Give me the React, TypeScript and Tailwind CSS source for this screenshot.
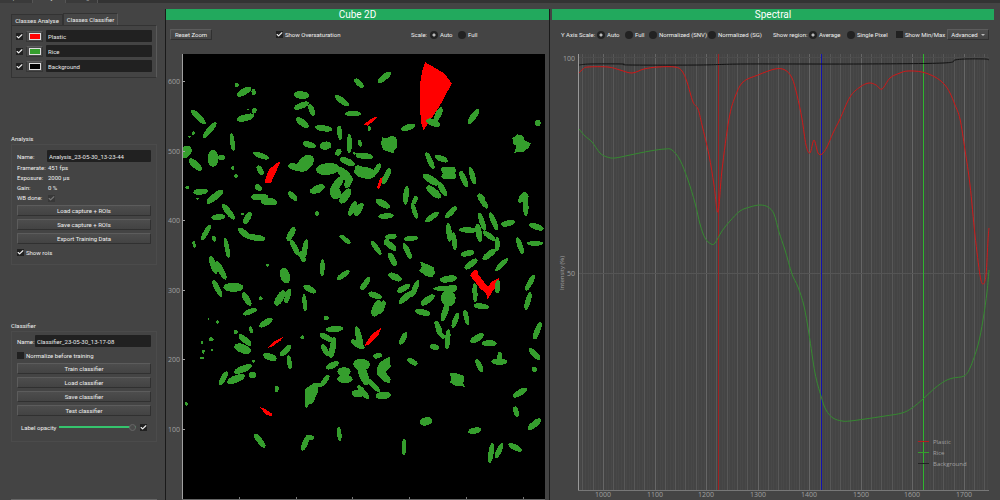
import React, { useState } from 'react';
import { Check } from 'lucide-react';

type Point = [number, number];
// x, y, length, thickness, rotation
type Grain = [number, number, number, number, number];

interface Tile {
  x: number;
  y: number;
  grains: Grain[];
  blobs?: string[];
  plastic?: string[];
}

// Classified objects, grouped by scan tile. Tile data is 3x oversampled.
const TILES: Tile[] = [
  {
    x: 165,
    y: 50,
    grains: [
      [215, 105, 12, 12, 0], [237, 125, 48, 20, -30], [266, 126, 18, 13, 80], [409, 135, 46, 22, 5], [409, 167, 48, 18, -22],
      [440, 180, 36, 16, 70], [582, 100, 36, 16, 45], [531, 152, 50, 18, 38], [564, 191, 48, 16, 0], [100, 201, 60, 18, 45],
      [242, 203, 54, 20, -15], [268, 182, 18, 13, -60], [249, 178, 6, 4, 0], [134, 240, 60, 17, -50], [85, 250, 12, 9, -60],
      [74, 260, 8, 6, 0], [202, 276, 54, 14, 82], [412, 218, 46, 20, 38], [476, 235, 52, 18, 8], [524, 248, 44, 14, 85],
      [553, 281, 58, 15, 90], [585, 280, 20, 12, 70], [433, 284, 40, 18, 15], [482, 287, 34, 24, -10], [62, 306, 42, 30, -50],
      [91, 344, 50, 20, 42], [144, 325, 50, 30, 90], [170, 323, 20, 16, 0], [288, 317, 50, 16, 20], [203, 354, 12, 10, 0],
      [213, 378, 11, 11, 0], [286, 361, 32, 16, 60], [390, 351, 42, 20, 15], [421, 340, 60, 38, -45], [520, 307, 22, 16, -50],
      [547, 335, 48, 20, 25], [568, 310, 8, 8, 0], [590, 317, 36, 16, 5], [488, 357, 70, 34, -5], [540, 375, 60, 26, 45],
      [515, 405, 60, 24, -55], [590, 365, 50, 24, 40], [67, 412, 12, 11, 0], [107, 425, 44, 18, -5], [280, 413, 24, 16, 45],
      [458, 417, 46, 22, -25], [550, 395, 40, 20, -70],
    ],
    plastic: ['340,336 345,338 330,372 318,398 300,400 299,393 312,358'],
  },
  {
    x: 355,
    y: 50,
    grains: [
      [88, 82, 50, 18, -38], [355, 200, 54, 18, -55], [250, 193, 46, 18, -65], [235, 218, 44, 20, 20], [548, 219, 18, 18, 0],
      [160, 232, 44, 18, -18], [43, 235, 16, 9, 80], [28, 318, 54, 18, 8], [225, 332, 54, 16, 65], [259, 326, 42, 17, 22],
      [326, 387, 54, 17, 68], [352, 377, 54, 16, 75], [228, 389, 56, 22, 32], [262, 417, 50, 18, 60], [236, 426, 54, 22, 40],
      [30, 368, 66, 34, 10], [66, 358, 40, 16, -60], [94, 379, 54, 17, -65], [378, 442, 26, 16, 45], [505, 440, 30, 20, -40],
    ],
    blobs: [
      '472,264 488,253 505,258 508,270 527,280 522,292 506,305 478,308 484,288 474,280',
      '80,262 96,265 108,257 124,262 127,290 118,300 118,311 85,300 79,285',
      '260,352 298,351 303,360 300,370 305,378 300,388 264,387 258,380 263,370 258,360',
    ],
    plastic: [
      '211,37 268,70 290,100 262,155 206,241 200,225 196,190 196,95 202,60',
      '27,224 45,208 68,198 65,205 38,227',
      '66,412 76,384 83,382 81,396 72,418',
    ],
  },
  {
    x: 165,
    y: 190,
    grains: [
      [97, 26, 8, 6, 0], [150, 20, 62, 20, -38], [284, 21, 52, 20, 0], [312, 35, 50, 22, 5], [383, 18, 36, 16, 45],
      [450, 3, 32, 14, 0], [512, 10, 32, 34, 0], [541, 18, 52, 24, -55], [563, 55, 48, 18, -65], [582, 58, 44, 18, -60],
      [456, 70, 14, 12, -50], [190, 65, 58, 18, 52], [160, 81, 42, 17, -5], [233, 72, 8, 8, 0], [247, 84, 40, 18, -60],
      [123, 127, 54, 15, -60], [147, 146, 18, 11, 80], [87, 163, 22, 9, 80], [186, 174, 62, 14, 80], [238, 130, 46, 18, 40],
      [272, 143, 60, 18, 8], [378, 132, 46, 18, -62], [389, 173, 54, 16, 62], [419, 180, 66, 16, -80], [412, 200, 34, 16, 70],
      [540, 148, 40, 14, 38], [145, 225, 56, 18, 70], [168, 241, 62, 18, 62], [307, 226, 9, 8, 0], [472, 233, 50, 14, -88],
      [535, 255, 46, 16, -35], [596, 287, 30, 16, -60], [360, 257, 48, 28, 75], [157, 295, 56, 16, 62], [205, 292, 60, 26, 0],
      [245, 327, 46, 18, 58], [287, 325, 12, 12, 0], [345, 324, 52, 22, -58], [368, 318, 46, 16, -75], [434, 297, 42, 18, 30],
      [419, 338, 52, 13, 85], [255, 365, 44, 16, -22], [303, 398, 46, 18, -32], [484, 384, 14, 13, 0], [157, 396, 10, 10, 0],
      [130, 386, 5, 5, 0], [212, 426, 12, 12, 0], [258, 419, 22, 10, 80], [139, 448, 14, 12, 0], [111, 457, 9, 8, 0],
      [509, 417, 52, 18, -5], [412, 442, 13, 10, -40], [582, 438, 60, 16, 75],
    ],
  },
  {
    x: 355,
    y: 190,
    grains: [
      [10, 58, 40, 18, -60], [83, 41, 48, 20, 28], [93, 78, 46, 16, -3], [153, 16, 56, 16, -85], [180, 30, 26, 14, -70],
      [178, 62, 50, 14, 72], [288, 67, 48, 16, -45], [231, 81, 48, 16, -35], [282, 127, 58, 16, 85], [298, 154, 54, 14, 85],
      [383, 34, 52, 16, 55], [505, 25, 36, 16, -35], [512, 45, 66, 17, 88], [381, 95, 56, 16, 72], [416, 94, 58, 16, 68],
      [340, 120, 58, 16, 2], [371, 128, 56, 18, 80], [402, 137, 46, 16, 35], [427, 162, 42, 14, 90], [403, 193, 50, 18, -38],
      [459, 100, 42, 18, -12], [544, 110, 46, 18, 20], [540, 160, 48, 14, 0], [495, 167, 52, 16, 72], [440, 224, 52, 15, -45],
      [338, 190, 42, 17, -12], [348, 222, 48, 18, -38], [64, 174, 50, 15, 55], [108, 140, 34, 15, -5], [106, 166, 46, 18, 40],
      [94, 155, 24, 12, -65], [112, 208, 44, 18, 62], [168, 145, 44, 15, -5], [157, 183, 52, 16, 65], [120, 261, 44, 20, 25],
      [32, 280, 44, 16, -58], [146, 295, 44, 18, -30], [180, 295, 54, 16, -68], [152, 322, 54, 18, -42], [280, 267, 52, 20, -8],
      [265, 296, 60, 14, 0], [292, 295, 28, 22, 0], [280, 325, 44, 46, 0], [270, 365, 60, 18, -72], [218, 330, 50, 20, -35],
      [203, 367, 48, 18, 12], [301, 391, 48, 16, -70], [334, 382, 48, 15, 78], [360, 308, 56, 15, 88], [428, 290, 40, 16, -85],
      [379, 349, 46, 17, 8], [525, 278, 54, 16, -62], [519, 333, 56, 16, -75], [547, 422, 54, 17, -68], [60, 316, 42, 18, 20],
      [65, 355, 52, 26, -68], [80, 352, 44, 18, -68], [250, 413, 46, 16, 68], [278, 448, 60, 16, -85], [257, 432, 34, 14, 50],
      [12, 442, 66, 18, 75], [145, 445, 42, 16, -62], [366, 445, 46, 20, -32], [403, 460, 44, 18, 0],
    ],
    blobs: ['195,214 215,222 238,232 239,250 232,263 212,258 193,242 200,230'],
    plastic: ['345,256 358,240 368,242 370,254 398,290 412,274 432,264 430,280 410,308 398,328 392,308 376,296'],
  },
  {
    x: 165,
    y: 335,
    grains: [
      [240, 15, 48, 18, 40], [233, 41, 52, 26, 20], [315, 66, 42, 20, 20], [362, 47, 44, 18, -45], [373, 81, 42, 14, 82],
      [265, 78, 9, 9, 0], [115, 50, 12, 8, -70], [141, 44, 7, 6, 0], [111, 69, 11, 6, 0], [234, 102, 56, 20, -22],
      [175, 130, 46, 17, -62], [213, 132, 56, 22, -22], [262, 120, 22, 18, 0], [335, 162, 20, 12, -80], [64, 207, 11, 10, 0],
      [485, 8, 46, 18, 30], [480, 45, 38, 16, 60], [503, 38, 66, 18, -80], [490, 56, 20, 14, 0], [578, 28, 48, 18, 30],
      [502, 91, 42, 18, -25], [537, 110, 40, 26, 0], [540, 132, 46, 24, 0], [480, 137, 42, 15, -55], [284, 317, 52, 17, 52],
      [420, 325, 46, 17, -68], [434, 308, 26, 16, 10], [523, 297, 44, 13, 85], [580, 175, 40, 22, 0],
    ],
    blobs: ['420,162 445,145 475,144 472,154 458,156 458,172 444,205 432,207 425,221 420,215 421,178'],
    plastic: ['306,41 330,18 353,7 348,16 325,32', '285,217 295,219 322,236 319,243 303,239'],
  },
  {
    x: 355,
    y: 335,
    grains: [
      [238, 36, 28, 17, 12], [68, 62, 26, 16, -15], [172, 80, 34, 16, 30], [373, 92, 44, 16, 65], [433, 80, 48, 18, 0],
      [434, 64, 28, 14, -85], [539, 57, 46, 18, 45], [541, 4, 18, 14, -60], [538, 103, 15, 15, 0], [20, 88, 50, 32, 5],
      [25, 118, 70, 26, 70], [54, 150, 56, 16, 45], [25, 172, 54, 16, 50], [8, 178, 30, 18, 0], [85, 181, 46, 22, -5],
      [495, 173, 50, 18, -30], [483, 230, 32, 15, 75], [538, 268, 50, 19, -40], [213, 259, 38, 24, -12], [359, 287, 40, 18, -12],
      [147, 336, 48, 14, -88], [408, 354, 60, 16, -82], [432, 347, 50, 16, -65], [480, 337, 44, 17, 28],
    ],
    blobs: [
      '283,116 300,113 325,122 329,135 324,145 329,155 300,152 284,142 290,132',
      '104,66 105,85 108,95 92,112 107,132 104,143 88,142 68,122 65,100 74,82 90,72',
    ],
    plastic: ['79,-22 70,0 40,30 30,32 34,22 52,-4'],
  },
];

const PLASTIC: Point[] = [
  [579, 73], [583, 69], [588, 67], [608, 67], [620, 70], [632, 73], [644, 69], [658, 67], [675, 67], [682, 71], [687, 82],
  [693, 102], [698, 109], [702, 125], [709, 155], [714, 185], [718, 212], [722, 170], [729, 119], [735, 97], [743, 82],
  [758, 75], [775, 69], [785, 70], [792, 78], [797, 95], [802, 119], [806, 145], [810, 153], [814, 140], [818, 153],
  [822, 154], [827, 147], [833, 133], [840, 119], [850, 97], [860, 87], [869, 83], [876, 85], [882, 89], [890, 78],
  [900, 73], [908, 71], [922, 72], [935, 77], [944, 84], [950, 93], [955, 105], [960, 119], [965, 150], [970, 185],
  [975, 235], [980, 275], [983, 284], [986, 275], [988, 240], [989, 228],
];

const RICE: Point[] = [
  [579, 129], [585, 136], [592, 142], [600, 153], [607, 157], [615, 158], [630, 155], [650, 151], [665, 149], [672, 150],
  [680, 160], [688, 180], [695, 203], [700, 224], [705, 238], [711, 244], [715, 243], [722, 231], [730, 221], [740, 211],
  [750, 207], [760, 205], [768, 207], [774, 214], [779, 232], [785, 250], [792, 274], [798, 287], [804, 306], [809, 334],
  [815, 373], [821, 396], [826, 410], [833, 418], [842, 421], [850, 421], [865, 419], [885, 416], [902, 413], [912, 408],
  [923, 399], [935, 388], [945, 381], [953, 378], [964, 376], [970, 368], [978, 345], [983, 320], [987, 292], [989, 270],
];

const BACKGROUND: Point[] = [
  [579, 65], [590, 64], [622, 64], [630, 65], [700, 65], [745, 64], [860, 64], [943, 63], [955, 60], [965, 59], [985, 59], [989, 60],
];

// Catmull-Rom spline through all samples
const smooth = (pts: Point[]) =>
  pts.slice(1).reduce((d, p, i) => {
    const a = pts[Math.max(i - 1, 0)];
    const b = pts[i];
    const c = pts[Math.min(i + 2, pts.length - 1)];
    return `${d} C${b[0] + (p[0] - a[0]) / 6},${b[1] + (p[1] - a[1]) / 6} ${p[0] - (c[0] - b[0]) / 6},${p[1] - (c[1] - b[1]) / 6} ${p[0]},${p[1]}`;
  }, `M${pts[0][0]},${pts[0][1]}`);

const waveX = (nm: number) => Math.round(603 + (nm - 1000) * 0.5155);

const Tick: React.FC<{ label?: string; aria?: string; on?: boolean; disabled?: boolean }> = ({ label, aria, on = false, disabled }) => {
  const [checked, setChecked] = useState(on);
  return (
    <label className="flex shrink-0 items-center gap-[2px] whitespace-nowrap">
      <span className="relative flex h-[7px] w-[7px] shrink-0">
        <input
          type="checkbox"
          aria-label={aria}
          checked={checked}
          disabled={disabled}
          onChange={() => setChecked(!checked)}
          className={`h-[7px] w-[7px] appearance-none ${disabled ? 'bg-[#383838]' : 'bg-[#212121]'}`}
        />
        {checked && <Check size={7} strokeWidth={4} className={`pointer-events-none absolute inset-0 ${disabled ? 'text-[#777]' : 'text-[#eee]'}`} />}
      </span>
      {label}
    </label>
  );
};

const Radio: React.FC<{ name: string; label: string; on?: boolean; className?: string }> = ({ name, label, on, className = '' }) => (
  <label className={`flex shrink-0 items-center gap-[2px] whitespace-nowrap ${className}`}>
    <input
      type="radio"
      name={name}
      defaultChecked={on}
      className="h-2 w-2 shrink-0 appearance-none rounded-full bg-[#222] checked:bg-[radial-gradient(circle,#bbb_0px,#bbb_1px,#222_2px)]"
    />
    {label}
  </label>
);

const Button: React.FC<{ children: React.ReactNode; className?: string }> = ({ children, className = '' }) => (
  <button
    type="button"
    className={`flex h-[11px] items-center justify-center rounded-[1px] border border-[#303030] border-t-[#5c5c5c] border-l-[#5c5c5c] bg-linear-to-b from-[#4d4d4d] to-[#434343] whitespace-nowrap ${className}`}
  >
    {children}
  </button>
);

const TextInput: React.FC<{ id?: string; aria?: string; value: string }> = ({ id, aria, value }) => (
  <input id={id} aria-label={aria} defaultValue={value} className="h-3 min-w-0 flex-1 rounded-[1px] bg-[#212121] px-[2px] text-[#e8e8e8] outline-none" />
);

const ClassRow: React.FC<{ name: string; swatch: string }> = ({ name, swatch }) => (
  <div className="flex h-3 items-center gap-[3px]">
    <Tick on aria={`Show ${name}`} />
    <button type="button" aria-label={`${name} color`} className="flex h-[11px] w-[17px] items-center justify-center border border-[#363636] border-t-[#5c5c5c] bg-[#4a4a4a]">
      <span className={`h-[7px] w-3 border border-[#ddd] ${swatch}`} />
    </button>
    <TextInput aria={`${name} name`} value={name} />
  </div>
);

const Sidebar: React.FC = () => (
  <aside className="flex min-w-0 flex-col pt-[10px] pr-2 pl-[11px]">
    <div role="tablist" className="flex h-3 items-end whitespace-nowrap">
      <button role="tab" aria-selected={false} className="h-[11px] w-[52px] border border-b-0 border-[#333] bg-[#404040]">Classes Analyse</button>
      <button role="tab" aria-selected className="h-3 w-[55px] border border-b-0 border-[#333] border-r-[#5a5a5a] bg-[#464646]">Classes Classifier</button>
    </div>
    <div className="flex h-[53px] flex-col gap-[3px] border border-[#333] border-r-[#5a5a5a] px-1 pt-1">
      <ClassRow name="Plastic" swatch="bg-[#f00]" />
      <ClassRow name="Rice" swatch="bg-[#359e2d]" />
      <ClassRow name="Background" swatch="bg-black" />
    </div>

    <h2 className="mt-14 h-[10px] leading-[10px]">Analysis</h2>
    <section className="border border-[#4b4b4b] px-[5px] pt-[5px] pb-[6px]">
      <div className="flex h-3 items-center">
        <label htmlFor="analysis-name" className="w-[30px] shrink-0">Name:</label>
        <TextInput id="analysis-name" value="Analysis_23-05-30_13-23-44" />
      </div>
      <dl className="mt-[1px] grid grid-cols-[31px_1fr] leading-[10px] whitespace-nowrap">
        <dt>Framerate:</dt>
        <dd>451 fps</dd>
        <dt>Exposure:</dt>
        <dd>2000 µs</dd>
        <dt>Gain:</dt>
        <dd>0 %</dd>
        <dt>WB done:</dt>
        <dd className="flex items-center"><Tick on disabled aria="WB done" /></dd>
      </dl>
      <div className="mt-[2px] flex flex-col gap-[3px]">
        <Button>Load capture + ROIs</Button>
        <Button>Save capture + ROIs</Button>
        <Button>Export Training Data</Button>
        <div className="flex h-[11px] items-center"><Tick on label="Show rois" /></div>
      </div>
    </section>

    <h2 className="mt-14 h-[10px] leading-[10px]">Classifier</h2>
    <section className="border border-[#4b4b4b] px-[5px] pt-[3px] pb-2">
      <div className="flex h-3 items-center">
        <label htmlFor="classifier-name" className="w-[18px] shrink-0">Name:</label>
        <TextInput id="classifier-name" value="Classifier_23-05-30_13-17-08" />
      </div>
      <div className="mt-[3px] flex flex-col gap-[3px]">
        <div className="flex h-[10px] items-center"><Tick label="Normalize before training" /></div>
        <Button>Train classifier</Button>
        <Button>Load classifier</Button>
        <Button>Save classifier</Button>
        <Button>Test classifier</Button>
      </div>
      <div className="mt-[5px] flex h-3 items-center gap-1 pr-1 pl-1">
        <label htmlFor="opacity" className="w-[34px] shrink-0 whitespace-nowrap">Label opacity</label>
        <input
          id="opacity"
          type="range"
          defaultValue={100}
          className="h-[2px] min-w-0 flex-1 appearance-none bg-[#35c46d] [&::-webkit-slider-thumb]:h-[7px] [&::-webkit-slider-thumb]:w-[7px] [&::-webkit-slider-thumb]:appearance-none [&::-webkit-slider-thumb]:rounded-full [&::-webkit-slider-thumb]:border [&::-webkit-slider-thumb]:border-[#666] [&::-webkit-slider-thumb]:bg-[#4a4a4a]"
        />
        <Tick on aria="Show labels" />
      </div>
    </section>
    <div className="mt-auto h-[1px] bg-[#666]" />
  </aside>
);

const CubeChart: React.FC = () => (
  <svg viewBox="166 54 383 446" className="block h-auto w-full font-['Open_Sans',sans-serif] text-[7px]" role="img" aria-label="Cube 2D">
    <rect x="183" y="54" width="362" height="445" fill="#000" />
    <clipPath id="cube"><rect x="183" y="54" width="362" height="445" /></clipPath>
    <g clipPath="url(#cube)" shapeRendering="crispEdges">
      {TILES.map((t, i) => (
        <g key={i} transform={`translate(${t.x} ${t.y}) scale(${1 / 3})`}>
          <g fill="#f00">{t.plastic?.map(p => <polygon key={p} points={p} />)}</g>
          <g fill="#359e2d">
            {t.blobs?.map(p => <polygon key={p} points={p} />)}
            {t.grains.map(([x, y, l, w, r], j) => (
              <rect key={j} x={x - l / 2} y={y - w / 2} width={l} height={w} rx={l * 0.4} ry={w / 2} transform={`rotate(${r} ${x} ${y})`} />
            ))}
          </g>
        </g>
      ))}
    </g>
    <g fill="#a0a0a0">
      <rect x="182" y="54" width="1" height="446" />
      <rect x="182" y="499" width="363" height="1" fill="#666" />
      {[600, 500, 400, 300, 200, 100].map((v, i) => (
        <g key={v}>
          <rect x="183" y={81 + Math.round(i * 69.6)} width="2" height="1" />
          <text x="180" y={84 + Math.round(i * 69.6)} textAnchor="end">{v}</text>
        </g>
      ))}
      {[239, 296, 352, 409, 466, 523].map(x => <rect key={x} x={x} y="497" width="1" height="2" fill="#777" />)}
    </g>
  </svg>
);

const SpectralChart: React.FC = () => (
  <svg viewBox="552 54 442 446" className="block h-auto w-full font-['Open_Sans',sans-serif] text-[7px]" role="img" aria-label="Spectral">
    <g shapeRendering="crispEdges">
      {Array.from({ length: 159 }, (_, i) => 955 + i * 5).map(nm => (
        <rect key={nm} x={waveX(nm)} y="54" width="1" height="436" fill={nm % 100 === 0 ? '#666' : nm % 20 === 0 ? '#575757' : '#484848'} />
      ))}
      <rect x="579" y="57" width="410" height="1" fill="#4c4c4c" />
      <rect x="579" y="273" width="410" height="1" fill="#555" />
      <rect x="578" y="54" width="1" height="437" fill="#999" />
      <rect x="578" y="490" width="411" height="1" fill="#777" />
      <rect x="718" y="54" width="1" height="436" fill="#a02020" />
      <rect x="821" y="54" width="1" height="436" fill="#1010b0" />
      <rect x="923" y="54" width="1" height="436" fill="#2fb52f" />
    </g>
    <g fill="none">
      <path d={smooth(BACKGROUND)} stroke="#111" />
      <path d={smooth(RICE)} stroke="#358a30" />
      <path d={smooth(PLASTIC)} stroke="#d01818" />
    </g>
    <g fill="#a0a0a0">
      <text x="575" y="61" textAnchor="end">100</text>
      <text x="575" y="276" textAnchor="end">50</text>
      <text textAnchor="middle" transform="translate(564 273) rotate(-90)" className="text-[6px]">Intensity (%)</text>
      {[1000, 1100, 1200, 1300, 1400, 1500, 1600, 1700].map(nm => (
        <text key={nm} x={waveX(nm)} y="497" textAnchor="middle">{nm}</text>
      ))}
      {[['Plastic', '#b81c1c'], ['Rice', '#359e2d'], ['Background', '#222']].map(([name, color], i) => (
        <g key={name} className="text-[6px]">
          <rect x="918" y={441 + i * 11} width="11" height="1" fill={color} />
          <text x="933" y={444 + i * 11}>{name}</text>
        </g>
      ))}
    </g>
  </svg>
);

const App: React.FC = () => (
  <div className="flex h-screen flex-col overflow-hidden bg-[#444] font-['Roboto','Liberation_Sans',sans-serif] text-[6px] leading-[9px] text-[#f0f0f0]">
    <nav className="flex h-[3px] shrink-0 items-end overflow-hidden bg-[#333]">
      <button className="h-3 w-[33px] border-r border-[#555] bg-[#3a3a3a] text-[#bbb]">Capture</button>
      <button className="h-3 w-[33px] border-r border-[#555] bg-[#444]">Analyse</button>
      <button className="h-3 w-8 border-r border-[#555] bg-[#3a3a3a] text-[#bbb]">Settings</button>
    </nav>
    <main className="grid min-h-0 flex-1 grid-cols-[165px_385fr_444fr] pr-[6px]">
      <Sidebar />
      <section className="mt-[6px] min-w-0 border-x border-[#1a1a1a]">
        <h1 className="h-[11px] bg-[#22a95d] text-center text-[10px] leading-[11px] text-white">Cube 2D</h1>
        <div className="flex h-[34px] items-center pb-[5px] pl-1">
          <Button className="w-[42px]">Reset Zoom</Button>
          <div className="ml-16 w-[135px]"><Tick on label="Show Oversaturation" /></div>
          <span className="w-[19px]">Scale:</span>
          <Radio name="cube-scale" label="Auto" on className="w-7" />
          <Radio name="cube-scale" label="Full" />
        </div>
        <CubeChart />
      </section>
      <section className="mt-[6px] min-w-0 pl-[2px]">
        <h1 className="h-[11px] bg-[#22a95d] text-center text-[10px] leading-[11px] text-white">Spectral</h1>
        <div className="flex h-[34px] items-center pr-[5px] pb-[5px] pl-[9px]">
          <span className="w-9 shrink-0 whitespace-nowrap">Y Axis Scale:</span>
          <Radio name="y-scale" label="Auto" on className="w-7" />
          <Radio name="y-scale" label="Full" className="w-6" />
          <Radio name="y-scale" label="Normalized (SNV)" className="w-[59px]" />
          <Radio name="y-scale" label="Normalized (SG)" className="w-[65px]" />
          <span className="w-9 shrink-0 whitespace-nowrap">Show region:</span>
          <Radio name="region" label="Average" on className="w-[38px]" />
          <Radio name="region" label="Single Pixel" className="w-[49px]" />
          <Tick label="Show Min/Max" />
          <Button className="ml-auto w-[42px] gap-[3px]">
            Advanced <span className="border-x-2 border-t-2 border-x-transparent border-t-[#bbb]" />
          </Button>
        </div>
        <SpectralChart />
      </section>
    </main>
  </div>
);

export default App;
